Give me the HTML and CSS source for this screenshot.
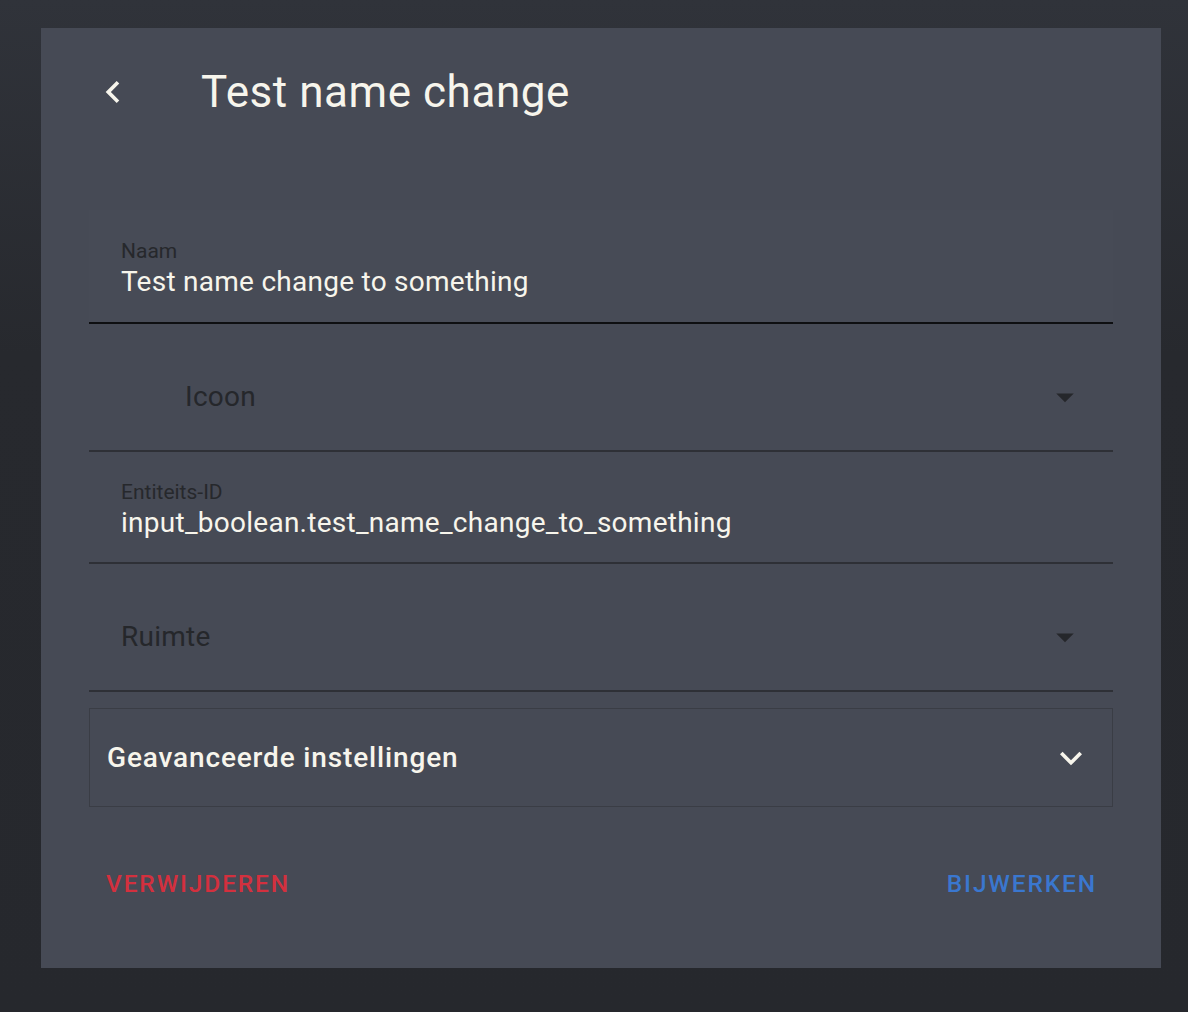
FILE: index.html
```html
<!DOCTYPE html>
<html lang="nl">
<head>
    <meta charset="UTF-8">
    <meta name="viewport" content="width=device-width, initial-scale=1.0">
    <title>Test name change</title>
    <link rel="stylesheet" href="styles.css">
</head>
<body>
    <div class="dialog">
        <div class="header">
            <svg class="back" viewBox="0 0 24 24"><path d="M15.41,16.58L10.83,12L15.41,7.41L14,6L8,12L14,18L15.41,16.58Z"/></svg>
            <h1 class="title">Test name change</h1>
        </div>

        <div class="content">
            <div class="field filled">
                <div class="label">Naam</div>
                <div class="value">Test name change to something</div>
            </div>

            <div class="field select">
                <div class="placeholder icon-slot">Icoon</div>
                <svg class="arrow" viewBox="0 0 24 24"><path d="M7,10L12,15L17,10H7Z"/></svg>
            </div>

            <div class="field entity">
                <div class="label">Entiteits-ID</div>
                <div class="value">input_boolean.test_name_change_to_something</div>
            </div>

            <div class="field select">
                <div class="placeholder">Ruimte</div>
                <svg class="arrow" viewBox="0 0 24 24"><path d="M7,10L12,15L17,10H7Z"/></svg>
            </div>

            <div class="expansion">
                <span class="expansion-title">Geavanceerde instellingen</span>
                <svg class="chevron" viewBox="0 0 24 24"><path d="M7.41,8.58L12,13.17L16.59,8.58L18,10L12,16L6,10L7.41,8.58Z"/></svg>
            </div>

            <div class="actions">
                <button class="btn delete">Verwijderen</button>
                <button class="btn update">Bijwerken</button>
            </div>
        </div>
    </div>
</body>
</html>
```

FILE: styles.css
```css
body {
    margin: 0;
    height: 1012px;
    overflow: hidden;
    background: linear-gradient(180deg, #30333a 0%, #27292e 35%, #26282d 100%);
    font-family: Roboto, 'Noto Sans', sans-serif;
    color: #f7f5ec;
}

.dialog {
    margin: 28px 0 0 41px;
    width: 1120px;
    height: 940px;
    background-color: #464a55;
    box-sizing: border-box;
}

.header {
    display: flex;
    align-items: center;
    height: 128px;
    padding-left: 50px;
}

.back {
    width: 44px;
    height: 44px;
    fill: #f7f5ec;
    flex-shrink: 0;
}

.title {
    margin: 0 0 0 66px;
    font-size: 44px;
    font-weight: 400;
    line-height: 52px;
    letter-spacing: 0.55px;
}

.content {
    padding: 54px 48px 0 48px;
}

.field {
    position: relative;
    padding: 29px 32px 24px 32px;
    border-bottom: 2px solid #2e3036;
}

.field.filled {
    background-color: #474b56;
    border-bottom-color: #0e0f11;
}

.field.entity {
    padding: 28px 32px 23px 32px;
}

.label {
    font-size: 21px;
    line-height: 24px;
    color: #26282c;
    margin-bottom: 3px;
}

.value {
    font-size: 28px;
    line-height: 32px;
    letter-spacing: 0.26px;
}

.field.select {
    padding: 57px 32px 37px 32px;
}

.placeholder {
    font-size: 28px;
    line-height: 32px;
    letter-spacing: 0.26px;
    color: #25272b;
}

.icon-slot {
    padding-left: 64px;
}

.arrow {
    position: absolute;
    right: 27px;
    top: 52px;
    width: 42px;
    height: 42px;
    fill: #25272b;
}

.expansion {
    margin-top: 16px;
    height: 97px;
    border: 1px solid #3a3d45;
    display: flex;
    align-items: center;
    justify-content: space-between;
    padding: 0 19px 0 17px;
}

.expansion-title {
    font-size: 28px;
    font-weight: 500;
    line-height: 32px;
    letter-spacing: 0.85px;
}

.chevron {
    width: 44px;
    height: 44px;
    fill: #f7f5ec;
}

.actions {
    display: flex;
    justify-content: space-between;
    margin-top: 45px;
    padding: 0 2px 0 3px;
}

.btn {
    height: 63px;
    padding: 0 14px;
    background: none;
    border: none;
    font-family: Roboto, 'Noto Sans', sans-serif;
    font-size: 24.5px;
    font-weight: 500;
    letter-spacing: 1.85px;
    text-transform: uppercase;
    cursor: pointer;
}

.delete {
    color: #d3303e;
}

.update {
    color: #3a77cf;
}
```
